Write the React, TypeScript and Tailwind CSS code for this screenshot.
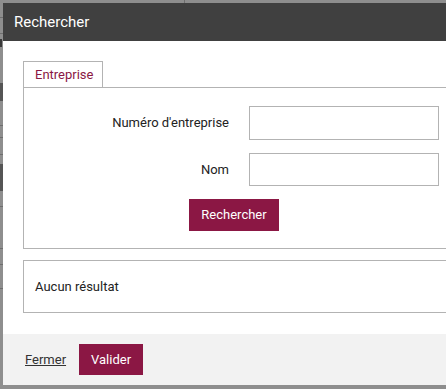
import React from "react";

const Line = () => <div className="h-px bg-[#6e6e6e]" />;

export default function App() {
  return (
    <div
      className="w-[446px] h-[389px] overflow-hidden bg-[#8e8e8e] flex"
      style={{ fontFamily: "Roboto, 'Liberation Sans', sans-serif" }}
    >
      {/* left strip of underlying page */}
      <div className="w-[3px] shrink-0 flex flex-col">
        <div className="h-[17px]" />
        <Line />
        <div className="h-[15px]" />
        <Line />
        <div className="h-[5px]" />
        <div className="h-[8px] bg-[#3a3a3a] w-[2px]" />
        <div className="h-[36px]" />
        <div className="h-[18px] bg-[#555555]" />
        <div className="h-[24px]" />
        <Line />
        <div className="h-[11px]" />
        <Line />
        <div className="h-[16px]" />
        <Line />
        <div className="h-[9px]" />
        <div className="h-[27px] bg-[#555555]" />
        <div className="h-[15px]" />
        <Line />
        <div className="h-[41px]" />
        <Line />
        <div className="h-[15px]" />
        <Line />
        <div className="h-[23px]" />
        <Line />
      </div>
      <div className="flex flex-col">
        {/* top strip */}
        <div className="h-[3px] flex">
          <div className="w-[181px]" />
          <div className="w-px bg-[#6e6e6e]" />
        </div>
        {/* dialog */}
        <div className="w-[480px] flex flex-col">
          <div className="h-[38px] bg-[#404040] flex items-center pl-[11px]">
            <span className="text-[15px] text-white">Rechercher</span>
          </div>
          <div className="bg-white pt-[20px] pl-[20px] pb-[21px] flex flex-col">
            <div className="flex">
              <div className="h-[27px] w-[80px] border border-b-0 border-[#b3b3b3] flex items-center pl-[11px] text-[13px] text-[#8b1744] bg-white">
                Entreprise
              </div>
            </div>
            <div className="border border-[#b3b3b3] h-[162px] -mt-px flex flex-col pt-[18px]">
              <div className="flex items-center">
                <div className="w-[205px] text-right text-[13px] text-[#222222]">Numéro d'entreprise</div>
                <div className="ml-[20px] w-[190px] h-[34px] border border-[#b3b3b3]" />
              </div>
              <div className="flex items-center mt-[13px]">
                <div className="w-[205px] text-right text-[13px] text-[#222222]">Nom</div>
                <div className="ml-[20px] w-[190px] h-[33px] border border-[#b3b3b3]" />
              </div>
              <div className="flex mt-[13px] pl-[165px]">
                <div className="w-[90px] h-[32px] bg-[#8b1744] text-white text-[13px] flex items-center justify-center">
                  Rechercher
                </div>
              </div>
            </div>
            <div className="mt-[11px] border border-[#b3b3b3] h-[53px] flex items-center pl-[11px] text-[13px] text-[#222222]">
              Aucun résultat
            </div>
          </div>
          <div className="bg-[#f2f2f2] h-[51px] flex items-center pl-[22px]">
            <span className="text-[13px] text-[#333333] underline">Fermer</span>
            <div className="ml-[13px] w-[64px] h-[31px] bg-[#8b1744] text-white text-[13px] flex items-center justify-center">
              Valider
            </div>
          </div>
        </div>
      </div>
    </div>
  );
}
